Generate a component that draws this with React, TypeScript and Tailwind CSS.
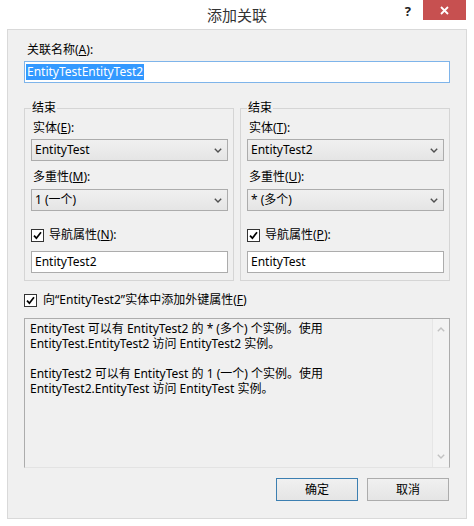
import React from "react";

function Chevron() {
  return (
    <svg width="8" height="5" viewBox="0 0 8 5" className="block">
      <path d="M0.8 0.8 L4 4 L7.2 0.8" fill="none" stroke="#505050" strokeWidth="1.4" />
    </svg>
  );
}

function Check() {
  return (
    <span className="flex h-[13px] w-[13px] shrink-0 items-center justify-center border border-[#333333] bg-white">
      <svg width="9" height="9" viewBox="0 0 9 9" className="block">
        <path d="M1 4.6 L3.4 7.2 L8 1.2" fill="none" stroke="#000" strokeWidth="1.7" />
      </svg>
    </span>
  );
}

function Select({ value }: { value: string }) {
  return (
    <div className="flex h-[22px] items-center justify-between border border-[#acacac] bg-gradient-to-b from-[#f0f0f0] to-[#e5e5e5] pl-[3px] pr-[5px]">
      <span className="leading-[16px]">{value}</span>
      <Chevron />
    </div>
  );
}

function End({
  entityKey,
  entity,
  multKey,
  mult,
  navKey,
  nav,
}: {
  entityKey: string;
  entity: string;
  multKey: string;
  mult: string;
  navKey: string;
  nav: string;
}) {
  return (
    <fieldset className="flex flex-col border border-[#d5d5d5] pb-[7px] pl-[6px] pr-[5px]">
      <legend className="px-[1px] leading-[16px]">结束</legend>
      <div className="mt-[4px] pl-[2px] leading-[16px]">
        实体(<span className="underline">{entityKey}</span>):
      </div>
      <div className="mt-[3px]">
        <Select value={entity} />
      </div>
      <div className="mt-[8px] pl-[2px] leading-[16px]">
        多重性(<span className="underline">{multKey}</span>):
      </div>
      <div className="mt-[4px]">
        <Select value={mult} />
      </div>
      <div className="mt-[16px] flex h-[16px] items-center gap-[5px]">
        <Check />
        <span className="leading-[16px]">
          导航属性(<span className="underline">{navKey}</span>):
        </span>
      </div>
      <div className="mt-[8px] flex h-[22px] items-center border border-[#acacac] bg-white pl-[3px]">
        <span className="leading-[16px]">{nav}</span>
      </div>
    </fieldset>
  );
}

export default function App() {
  return (
    <div className="relative h-[526px] w-[474px] bg-white font-['Noto_Sans','Noto_Sans_CJK_SC',sans-serif] text-[12px] text-black">
      <div className="relative flex h-[29px] items-center justify-center">
        <span className="text-[15px] leading-[20px] text-[#333333]">添加关联</span>
        <div className="absolute right-[8px] top-0 flex items-start">
          <span className="mr-[12px] mt-[2px] text-[13px] font-bold leading-[18px] text-[#222]">?</span>
          <div className="flex h-[20px] w-[43px] items-center justify-center bg-[#c75050]">
            <svg width="9" height="9" viewBox="0 0 9 9" className="block">
              <path d="M1 1 L8 8 M8 1 L1 8" stroke="#fff" strokeWidth="1.8" />
            </svg>
          </div>
        </div>
      </div>

      <div className="mx-[7px] flex h-[490px] flex-col border border-[#d9d9d9] bg-[#f0f0f0] px-[16px]">
        <div className="mt-[12px] pl-[3px] leading-[16px]">
          关联名称(<span className="underline">A</span>):
        </div>
        <div className="mt-[3px] flex h-[22px] items-center border border-[#7eb4ea] bg-white pl-[1px]">
          <span className="bg-[#3399ff] px-[1px] leading-[16px] text-white">EntityTestEntityTest2</span>
        </div>

        <div className="mt-[17px] grid grid-cols-2 gap-[6px]">
          <End entityKey="E" entity="EntityTest" multKey="M" mult="1 (一个)" navKey="N" nav="EntityTest2" />
          <End entityKey="T" entity="EntityTest2" multKey="U" mult="* (多个)" navKey="P" nav="EntityTest" />
        </div>

        <div className="mt-[11px] flex h-[16px] items-center gap-[6px]">
          <Check />
          <span className="leading-[16px]">
            向“EntityTest2”实体中添加外键属性(<span className="underline">F</span>)
          </span>
        </div>

        <div className="mt-[10px] flex h-[150px] border border-[#acacac] border-b-[#e3e3e3] bg-[#f0f0f0]">
          <div className="flex-1 pl-[5px] pt-[2px] leading-[15px]">
            <div>EntityTest 可以有 EntityTest2 的 * (多个) 个实例。使用</div>
            <div>EntityTest.EntityTest2 访问 EntityTest2 实例。</div>
            <div>&nbsp;</div>
            <div>EntityTest2 可以有 EntityTest 的 1 (一个) 个实例。使用</div>
            <div>EntityTest2.EntityTest 访问 EntityTest 实例。</div>
          </div>
          <div className="flex w-[17px] flex-col items-center justify-between border-l border-[#e6e6e6] bg-[#f3f3f3] py-[8px]">
            <svg width="8" height="5" viewBox="0 0 8 5" className="block">
              <path d="M0.8 4.2 L4 1 L7.2 4.2" fill="none" stroke="#c2c2c2" strokeWidth="1.4" />
            </svg>
            <svg width="8" height="5" viewBox="0 0 8 5" className="block">
              <path d="M0.8 0.8 L4 4 L7.2 0.8" fill="none" stroke="#c2c2c2" strokeWidth="1.4" />
            </svg>
          </div>
        </div>

        <div className="mt-[10px] flex justify-end gap-[9px] pr-[1px]">
          <div className="flex h-[23px] w-[82px] items-center justify-center border border-[#3c7fb1] bg-gradient-to-b from-[#f0f0f0] to-[#e5e5e5] leading-[16px]">
            确定
          </div>
          <div className="flex h-[23px] w-[82px] items-center justify-center border border-[#acacac] bg-gradient-to-b from-[#f0f0f0] to-[#e5e5e5] leading-[16px]">
            取消
          </div>
        </div>
      </div>
    </div>
  );
}
